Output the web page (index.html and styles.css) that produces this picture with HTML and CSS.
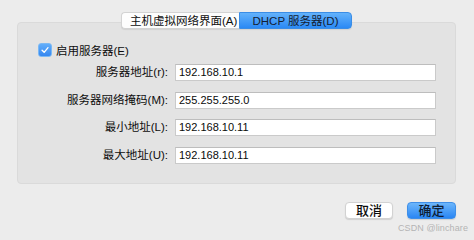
FILE: index.html
```html
<!DOCTYPE html>
<html lang="zh">
<head>
<meta charset="utf-8">
<link rel="stylesheet" href="styles.css">
</head>
<body>
<div class="window">
  <div class="tabs">
    <div class="tab">主机虚拟网络界面(A)</div>
    <div class="tab active">DHCP 服务器(D)</div>
  </div>
  <div class="group">
    <label class="check-row">
      <span class="checkbox"><svg viewBox="0 0 12 12" width="10" height="10"><path d="M2.5 6.3 L5 8.8 L9.6 3.2" fill="none" stroke="#fff" stroke-width="1.6" stroke-linecap="round" stroke-linejoin="round"/></svg></span>
      <span>启用服务器(E)</span>
    </label>
    <div class="form">
      <div class="label">服务器地址(r):</div>
      <div class="field">192.168.10.1</div>
      <div class="label">服务器网络掩码(M):</div>
      <div class="field">255.255.255.0</div>
      <div class="label">最小地址(L):</div>
      <div class="field">192.168.10.11</div>
      <div class="label">最大地址(U):</div>
      <div class="field">192.168.10.11</div>
    </div>
  </div>
  <div class="buttons">
    <div class="btn">取消</div>
    <div class="btn primary">确定</div>
  </div>
  <div class="watermark">CSDN @linchare</div>
</div>
</body>
</html>
```
FILE: styles.css
```css
html, body {
  margin: 0;
  padding: 0;
}
body {
  width: 474px;
  height: 237px;
  background: #ececec;
  font-family: "Liberation Sans", "Noto Sans CJK SC", sans-serif;
  font-size: 11.5px;
  color: #0d0d0d;
  overflow: hidden;
}
.window {
  position: relative;
  height: 237px;
  display: flex;
  flex-direction: column;
  padding: 12px 18px 0 17px;
  box-sizing: border-box;
}
.tabs {
  position: relative;
  z-index: 2;
  display: flex;
  justify-content: center;
  height: 17px;
  margin-bottom: -7px;
}
.tab {
  height: 17px;
  line-height: 16px;
  padding: 0 0 0 8px;
  width: 118px;
  box-sizing: border-box;
  background: #fdfdfd;
  border: 1px solid #d3d3d3;
  border-right: none;
  border-radius: 4px 0 0 4px;
  box-shadow: 0 1px 1px rgba(0,0,0,0.08);
}
.tab.active {
  width: 113px;
  padding: 0;
  text-align: center;
  background: linear-gradient(#63b2fb, #2a89f5);
  border: 1px solid #3a8de6;
  border-radius: 0 4px 4px 0;
  color: #142033;
}
.group {
  height: 162px;
  box-sizing: border-box;
  background: #e3e3e3;
  border: 1px solid #dadada;
  border-radius: 4px;
  padding: 20px 0 0 0;
}
.check-row {
  display: flex;
  align-items: center;
  gap: 4px;
  margin-left: 20px;
  height: 14px;
}
.checkbox {
  width: 14px;
  height: 14px;
  box-sizing: border-box;
  border-radius: 3px;
  background: linear-gradient(#62aefa, #3587f0);
  border: 1px solid #7ab8f4;
  display: flex;
  align-items: center;
  justify-content: center;
}
.form {
  display: grid;
  grid-template-columns: 150px 261px;
  grid-auto-rows: 17px;
  column-gap: 7px;
  row-gap: 10.6px;
  margin-top: 7px;
}
.label {
  text-align: right;
  line-height: 17px;
  white-space: nowrap;
}
.field {
  background: #fff;
  border: 1px solid #cacaca;
  border-top-color: #bdbdbd;
  box-sizing: border-box;
  font-size: 11px;
  line-height: 15px;
  padding-left: 3px;
  color: #0a0a0a;
}
.buttons {
  display: flex;
  justify-content: flex-end;
  gap: 14px;
  margin-top: 18px;
}
.btn {
  width: 48px;
  height: 17px;
  line-height: 16px;
  text-align: center;
  font-size: 13px;
  font-weight: 500;
  background: #fff;
  border: 1px solid #d2d2d2;
  border-radius: 4px;
  box-sizing: border-box;
  box-shadow: 0 1px 1px rgba(0,0,0,0.12);
}
.btn.primary {
  width: 49px;
  background: linear-gradient(#6cb6fb, #2a86f4);
  border-color: #3f8fe8;
  color: #0f1d33;
}
.watermark {
  position: absolute;
  right: 6px;
  bottom: 4px;
  font-size: 9px;
  color: #b4b4b4;
  letter-spacing: 0.1px;
}
```
